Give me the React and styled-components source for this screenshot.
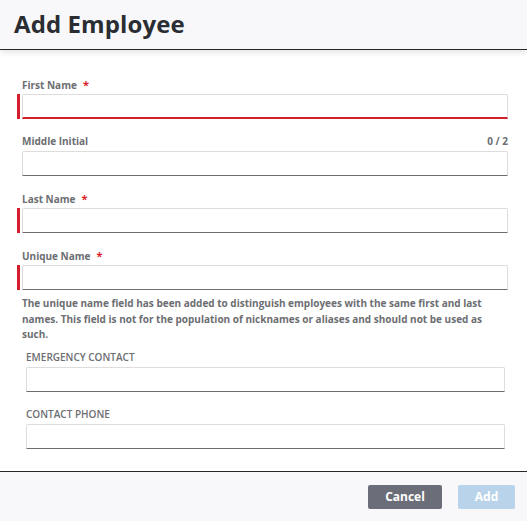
import React, { useState } from "react";
import styled, { createGlobalStyle } from "styled-components";

const GlobalStyle = createGlobalStyle`
  html, body {
    margin: 0;
    padding: 0;
    background: #ffffff;
  }
  body {
    font-family: "Open Sans", "Liberation Sans", sans-serif;
  }
  * {
    box-sizing: border-box;
  }
`;

// container
const Modal = styled.div`
  width: 527px;
  height: 521px;
  display: flex;
  flex-direction: column;
  background: #ffffff;
  overflow: hidden;
`;

const Header = styled.header`
  height: 50px;
  flex-shrink: 0;
  display: flex;
  align-items: center;
  padding: 0 14px;
  background: #f8f8fa;
  border-bottom: 1px solid #26282b;
  box-shadow: 0 2px 6px rgba(0, 0, 0, 0.12);
  position: relative;
  z-index: 1;
`;

const Title = styled.h1`
  margin: 0;
  margin-top: -2px;
  font-size: 24px;
  font-weight: 700;
  color: #2a2d32;
  letter-spacing: 0.1px;
`;

// form block
const Body = styled.form`
  flex: 1;
  padding: 27px 19px 0 17px;
`;

const Field = styled.div`
  margin-bottom: 15px;
`;

const LabelRow = styled.div`
  display: flex;
  justify-content: space-between;
  align-items: center;
  height: 14px;
  margin-bottom: 3px;
  padding-left: ${(p) => (p.$inset ? "0" : "5px")};
`;

const Label = styled.label`
  font-size: 10px;
  color: #6c6e72;
  text-transform: ${(p) => (p.$caps ? "uppercase" : "none")};
  font-weight: ${(p) => (p.$caps ? 600 : 700)};
`;

const Required = styled.span`
  color: #d81f2c;
  margin-left: 6px;
  font-size: 11px;
`;

const Counter = styled.span`
  font-size: 10px;
  font-weight: 700;
  color: #6c6e72;
`;

const InputRow = styled.div`
  display: flex;
  align-items: stretch;
  border-left: 3px solid ${(p) => (p.$required ? "#d31f2c" : "transparent")};
  padding-left: 2px;
`;

const Input = styled.input`
  flex: 1;
  width: ${(p) => (p.$full ? "100%" : "auto")};
  height: 25px;
  border: 1px solid #dddddd;
  border-bottom: ${(p) => (p.$error ? "2px solid #d31f2c" : "1px solid #6e6e6e")};
  border-radius: 2px 2px 0 0;
  padding: 0 6px;
  font-family: inherit;
  font-size: 12px;
  outline: none;
  background: #ffffff;
`;

const HelpText = styled.p`
  margin: -9px 0 7px 5px;
  font-size: 10px;
  font-weight: 700;
  line-height: 15.5px;
  color: #6c6e72;
`;

const ContactGroup = styled.div`
  padding: 0 3px 0 9px;
`;

const Footer = styled.footer`
  height: 50px;
  flex-shrink: 0;
  display: flex;
  align-items: center;
  justify-content: flex-end;
  gap: 16px;
  padding: 0 12px 0 0;
  background: #f8f8fa;
  border-top: 1px solid #26282b;
`;

const Button = styled.button`
  height: 24px;
  min-width: ${(p) => p.$width}px;
  border: none;
  border-radius: 2px;
  font-family: inherit;
  font-size: 12px;
  font-weight: 700;
  color: #ffffff;
  background: ${(p) => (p.$primary ? "#b8d3ea" : "#6b6e79")};
  cursor: pointer;
`;

function TextField({ label, required, error, counter, value, onChange }) {
  return (
    <Field>
      <LabelRow>
        <Label>
          {label}
          {required && <Required>*</Required>}
        </Label>
        {counter && <Counter>{counter}</Counter>}
      </LabelRow>
      <InputRow $required={required}>
        <Input $error={error} value={value} onChange={onChange} />
      </InputRow>
    </Field>
  );
}

function App() {
  const [values, setValues] = useState({
    first: "",
    middle: "",
    last: "",
    unique: "",
    emergency: "",
    phone: "",
  });

  const update = (key) => (e) => setValues({ ...values, [key]: e.target.value });

  return (
    <Modal>
      <GlobalStyle />
      <Header>
        <Title>Add Employee</Title>
      </Header>
      <Body onSubmit={(e) => e.preventDefault()}>
        <TextField label="First Name" required error value={values.first} onChange={update("first")} />
        <TextField
          label="Middle Initial"
          counter={`${values.middle.length} / 2`}
          value={values.middle}
          onChange={update("middle")}
        />
        <TextField label="Last Name" required value={values.last} onChange={update("last")} />
        <TextField label="Unique Name" required value={values.unique} onChange={update("unique")} />
        <HelpText>
          The unique name field has been added to distinguish employees with the same first and last
          names. This field is not for the population of nicknames or aliases and should not be used as
          such.
        </HelpText>
        <ContactGroup>
          <Field>
            <LabelRow $inset>
              <Label $caps>Emergency Contact</Label>
            </LabelRow>
            <Input $full value={values.emergency} onChange={update("emergency")} />
          </Field>
          <Field>
            <LabelRow $inset>
              <Label $caps>Contact Phone</Label>
            </LabelRow>
            <Input $full value={values.phone} onChange={update("phone")} />
          </Field>
        </ContactGroup>
      </Body>
      <Footer>
        <Button $width={74}>Cancel</Button>
        <Button $primary $width={57}>Add</Button>
      </Footer>
    </Modal>
  );
}

export default App;
